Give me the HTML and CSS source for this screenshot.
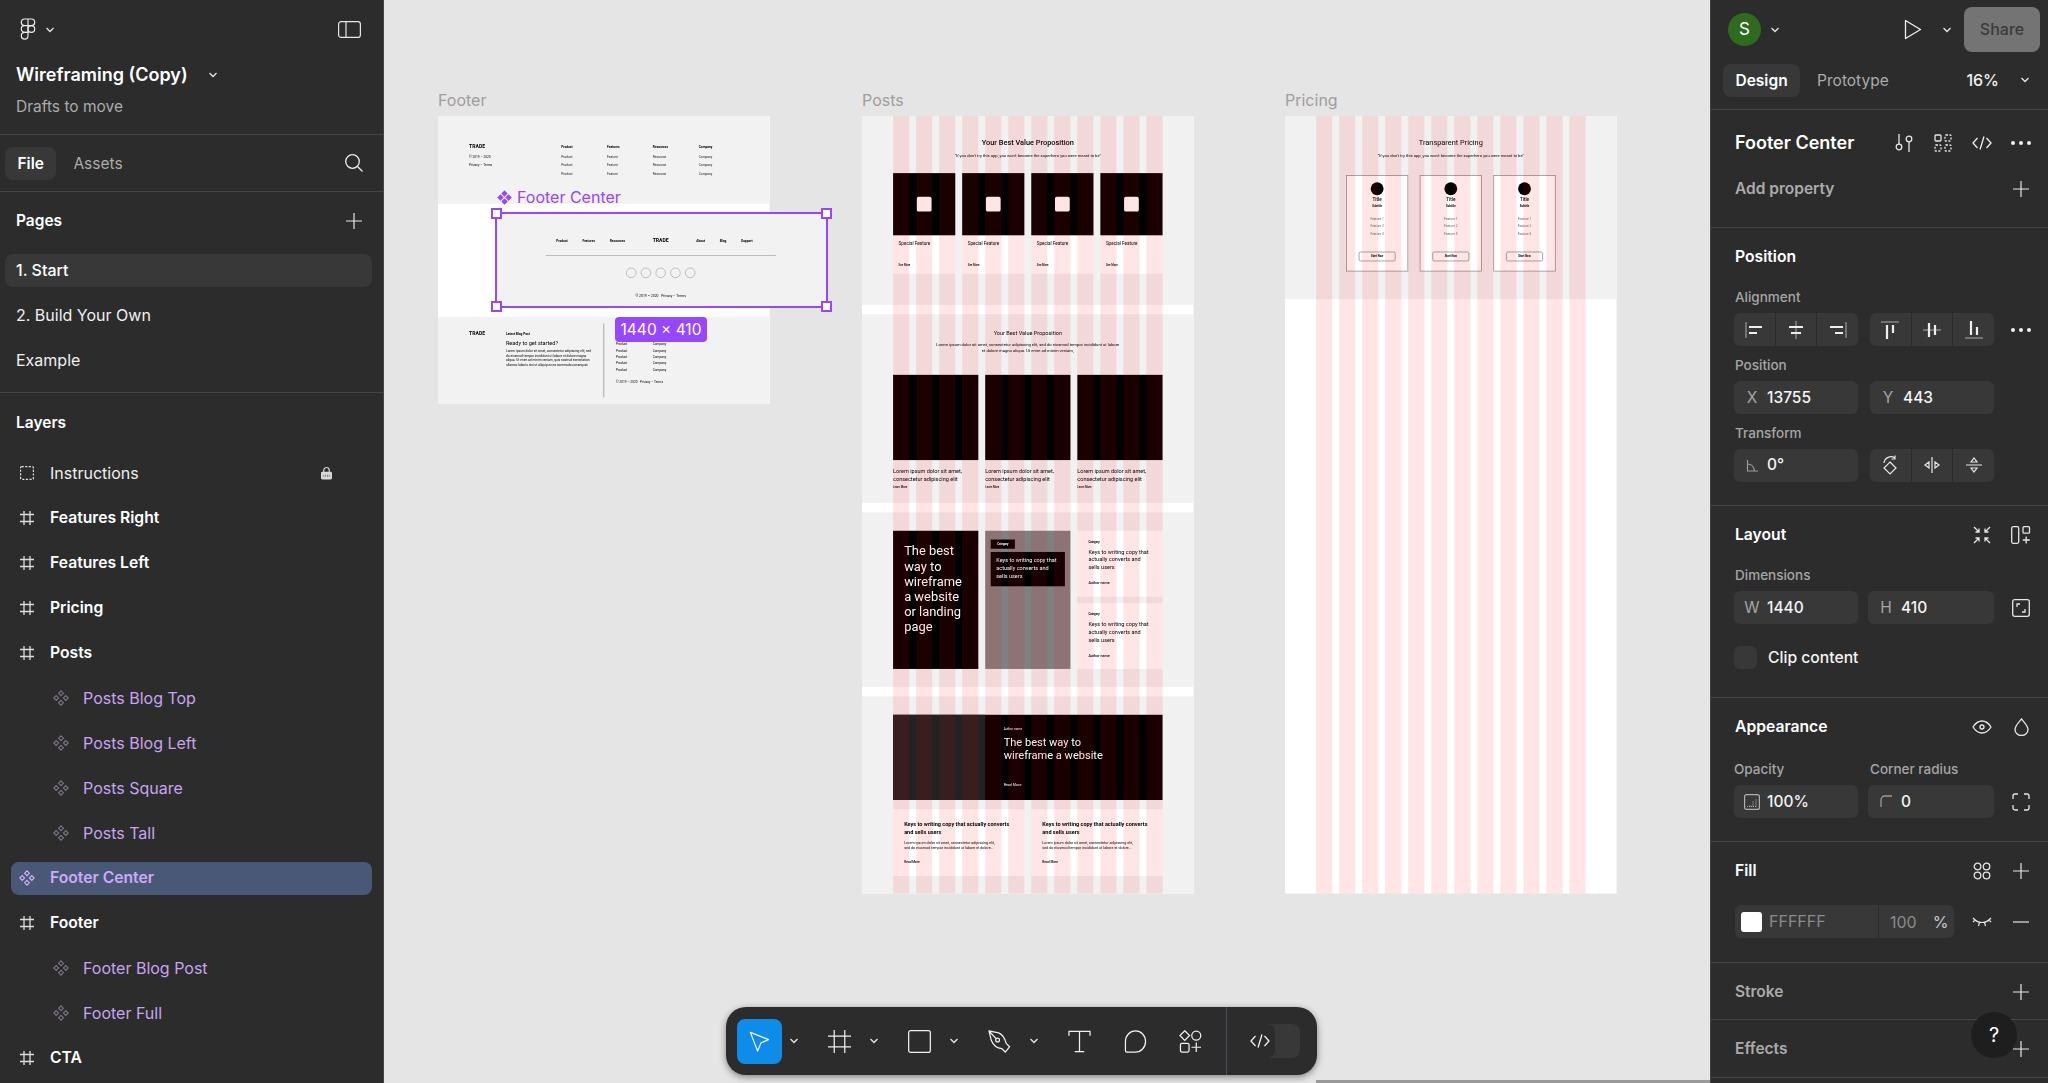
FILE: index.html
```html
<!DOCTYPE html>
<html lang="en">
<head>
    <meta charset="UTF-8">
    <title>Wireframing (Copy) - Figma</title>
    <link rel="stylesheet" href="styles.css">
</head>
<body>
    <svg class="defs" width="0" height="0">
        <symbol id="i-chev" viewBox="0 0 10 6"><path d="M1.5 1l3.5 3.5L8.5 1" fill="none" stroke="currentColor" stroke-width="1.3"/></symbol>
        <symbol id="i-plus" viewBox="0 0 16 16"><path d="M8 0v16M0 8h16" fill="none" stroke="currentColor" stroke-width="1.2"/></symbol>
        <symbol id="i-hash" viewBox="0 0 14 14"><path d="M4 0v14M10 0v14M0 3.5h14M0 10.5h14" fill="none" stroke="currentColor" stroke-width="1.3"/></symbol>
        <symbol id="i-comp" viewBox="0 0 16 16"><path d="M8 .8l2.4 2.4L8 5.6 5.6 3.2zM3.2 5.6l2.4 2.4-2.4 2.4L.8 8zM12.800 5.6L15.200 8l-2.400 2.400L10.400 8zM8 10.400l2.400 2.400L8 15.200l-2.400-2.400z" fill="none" stroke="currentColor" stroke-width="1.100"/></symbol>
        <symbol id="i-dots" viewBox="0 0 22 6"><circle cx="3" cy="3" r="2"/><circle cx="11" cy="3" r="2"/><circle cx="19" cy="3" r="2"/></symbol>
    </svg>

    <aside class="left-panel">
        <header class="file-head">
            <div class="logo-row">
                <svg class="figma-logo" viewBox="0 0 16 24" fill="none" stroke="currentColor" stroke-width="1.200">
                    <path d="M8 1H4.500a3.500 3.500 0 0 0 0 7H8zM8 1h3.500a3.500 3.500 0 0 1 0 7H8zM8 8H4.500a3.500 3.500 0 0 0 0 7H8z"/>
                    <circle cx="11.500" cy="11.500" r="3.500"/>
                    <path d="M4.500 15H8v3.500a3.500 3.500 0 1 1-3.500-3.500z"/>
                </svg>
                <svg class="chev"><use href="#i-chev"/></svg>
                <svg class="toggle-icon" viewBox="0 0 23 17" fill="none" stroke="currentColor" stroke-width="1.200">
                    <rect x=".6" y=".6" width="21.800" height="15.800" rx="2.500"/>
                    <path d="M8 .6v15.800"/>
                </svg>
            </div>
            <div class="file-title">Wireframing (Copy) <svg class="chev"><use href="#i-chev"/></svg></div>
            <div class="file-sub">Drafts to move</div>
        </header>

        <div class="tabs">
            <span class="tab tab-on">File</span>
            <span class="tab">Assets</span>
            <svg class="search-icon" viewBox="0 0 18 18" fill="none" stroke="currentColor" stroke-width="1.300">
                <circle cx="7.500" cy="7.500" r="6.800"/>
                <path d="M12.500 12.500l5 5"/>
            </svg>
        </div>

        <section class="pages">
            <div class="side-title">Pages <svg class="plus"><use href="#i-plus"/></svg></div>
            <div class="page-row page-on">1. Start</div>
            <div class="page-row">2. Build Your Own</div>
            <div class="page-row">Example</div>
        </section>

        <section class="layers">
            <div class="side-title">Layers</div>
            <div class="layer">
                <svg class="layer-icon" viewBox="0 0 14 14"><rect x=".6" y=".6" width="12.800" height="12.800" rx="1" fill="none" stroke="currentColor" stroke-width="1.200" stroke-dasharray="2.200 1.400"/></svg>
                <span class="layer-plain">Instructions</span>
                <svg class="lock" viewBox="0 0 12 14"><path d="M3 6V4a3 3 0 0 1 6 0v2" fill="none" stroke="currentColor" stroke-width="1.300"/><rect y="5.500" width="12" height="8.500" rx="1.500" fill="currentColor"/><path d="M2.500 10h7" stroke="#777" stroke-width="2" stroke-dasharray="1 1"/></svg>
            </div>
            <div class="layer"><svg class="layer-icon"><use href="#i-hash"/></svg><b>Features Right</b></div>
            <div class="layer"><svg class="layer-icon"><use href="#i-hash"/></svg><b>Features Left</b></div>
            <div class="layer"><svg class="layer-icon"><use href="#i-hash"/></svg><b>Pricing</b></div>
            <div class="layer"><svg class="layer-icon"><use href="#i-hash"/></svg><b>Posts</b></div>
            <div class="layer layer-child"><svg class="comp-icon"><use href="#i-comp"/></svg>Posts Blog Top</div>
            <div class="layer layer-child"><svg class="comp-icon"><use href="#i-comp"/></svg>Posts Blog Left</div>
            <div class="layer layer-child"><svg class="comp-icon"><use href="#i-comp"/></svg>Posts Square</div>
            <div class="layer layer-child"><svg class="comp-icon"><use href="#i-comp"/></svg>Posts Tall</div>
            <div class="layer layer-on"><svg class="layer-icon"><use href="#i-comp"/></svg>Footer Center</div>
            <div class="layer"><svg class="layer-icon"><use href="#i-hash"/></svg><b>Footer</b></div>
            <div class="layer layer-child"><svg class="comp-icon"><use href="#i-comp"/></svg>Footer Blog Post</div>
            <div class="layer layer-child"><svg class="comp-icon"><use href="#i-comp"/></svg>Footer Full</div>
            <div class="layer"><svg class="layer-icon"><use href="#i-hash"/></svg><b>CTA</b></div>
        </section>
    </aside>

    <main class="canvas">
        <div class="frame-label label-footer">Footer</div>
        <div class="frame-label label-posts">Posts</div>
        <div class="frame-label label-pricing">Pricing</div>

        <!-- frames are built at 1440 wide and scaled down like the zoomed canvas -->
        <div class="frame frame-footer">
            <div class="ft-top">
                <div class="ft-brand">
                    <div class="trade">TRADE</div>
                    <p>© 2019 – 2020</p>
                    <p>Privacy – Terms</p>
                </div>
                <div class="ft-col"><b>Product</b><span>Product</span><span>Product</span><span>Product</span></div>
                <div class="ft-col"><b>Features</b><span>Feature</span><span>Feature</span><span>Feature</span></div>
                <div class="ft-col"><b>Resources</b><span>Resource</span><span>Resource</span><span>Resource</span></div>
                <div class="ft-col"><b>Company</b><span>Company</span><span>Company</span><span>Company</span></div>
            </div>
            <div class="ft-gap"></div>
            <div class="ft-bottom">
                <div class="trade ft-bottom-logo">TRADE</div>
                <div class="ft-post">
                    <b>Latest Blog Post</b>
                    <h4>Ready to get started?</h4>
                    <p>Lorem ipsum dolor sit amet, consectetur adipiscing elit, sed do eiusmod tempor incididunt ut labore et dolore magna aliqua. Ut enim ad minim veniam, quis nostrud exercitation ullamco laboris nisi ut aliquip ex ea commodo consequat.</p>
                </div>
                <div class="ft-rule"></div>
                <div class="ft-links">
                    <div class="ft-link-cols">
                        <div class="ft-link-col"><span>Product</span><span>Product</span><span>Product</span><span>Product</span><span>Product</span></div>
                        <div class="ft-link-col"><span>Company</span><span>Company</span><span>Company</span><span>Company</span><span>Company</span></div>
                    </div>
                    <p>© 2019 – 2020 &nbsp; Privacy – Terms</p>
                </div>
            </div>

            <div class="footer-center">
                <nav class="fc-nav">
                    <div class="fc-nav-left"><b>Product</b><b>Features</b><b>Resources</b></div>
                    <div class="trade">TRADE</div>
                    <div class="fc-nav-right"><b>About</b><b>Blog</b><b>Support</b></div>
                </nav>
                <div class="fc-line"></div>
                <div class="fc-circles"><i></i><i></i><i></i><i></i><i></i></div>
                <p class="fc-copy">© 2019 – 2020 &nbsp; Privacy – Terms</p>
            </div>
        </div>

        <div class="frame frame-posts">
            <section class="wf s-features">
                <h2>Your Best Value Proposition</h2>
                <p class="wf-sub">"If you don't try this app, you won't become the superhero you were meant to be"</p>
                <div class="feature-row">
                    <div class="feature"><div class="feature-img"><i></i></div><h5>Special Feature</h5><b>See More →</b></div>
                    <div class="feature"><div class="feature-img"><i></i></div><h5>Special Feature</h5><b>See More →</b></div>
                    <div class="feature"><div class="feature-img"><i></i></div><h5>Special Feature</h5><b>See More →</b></div>
                    <div class="feature"><div class="feature-img"><i></i></div><h5>Special Feature</h5><b>See More →</b></div>
                </div>
            </section>
            <section class="wf s-blog">
                <h3>Your Best Value Proposition</h3>
                <p class="wf-lead">Lorem ipsum dolor sit amet, consectetur adipiscing elit, sed do eiusmod tempor incididunt ut labore<br>et dolore magna aliqua. Ut enim ad minim veniam,</p>
                <div class="blog-row">
                    <div class="blog"><div class="blog-img"></div><p>Lorem ipsum dolor sit amet,<br>consectetur adipiscing elit</p><b>Learn More</b></div>
                    <div class="blog"><div class="blog-img"></div><p>Lorem ipsum dolor sit amet,<br>consectetur adipiscing elit</p><b>Learn More</b></div>
                    <div class="blog"><div class="blog-img"></div><p>Lorem ipsum dolor sit amet,<br>consectetur adipiscing elit</p><b>Learn More</b></div>
                </div>
            </section>
            <section class="wf s-square">
                <div class="tall tall-dark">The best<br>way to<br>wireframe<br>a website<br>or landing<br>page</div>
                <div class="tall tall-gray">
                    <span class="tag">Category</span>
                    <p class="tall-box">Keys to writing copy that actually converts and sells users</p>
                </div>
                <div class="stack">
                    <div class="mini"><b>Category</b><p>Keys to writing copy that actually converts and sells users</p><span>Author name</span></div>
                    <div class="mini"><b>Category</b><p>Keys to writing copy that actually converts and sells users</p><span>Author name</span></div>
                </div>
            </section>
            <section class="wf s-hero">
                <div class="hero">
                    <div class="hero-img"></div>
                    <div class="hero-body">
                        <small>Author name</small>
                        <h2>The best way to<br>wireframe a website</h2>
                        <span>Read More</span>
                    </div>
                </div>
                <div class="teaser-row">
                    <div class="teaser"><h5>Keys to writing copy that actually converts and sells users</h5><p>Lorem ipsum dolor sit amet, consectetur adipiscing elit,<br>sed do eiusmod tempor incididunt ut labore et dolore...</p><b>Read More</b></div>
                    <div class="teaser"><h5>Keys to writing copy that actually converts and sells users</h5><p>Lorem ipsum dolor sit amet, consectetur adipiscing elit,<br>sed do eiusmod tempor incididunt ut labore et dolore...</p><b>Read More</b></div>
                </div>
            </section>
            <div class="cols"><i></i><i></i><i></i><i></i><i></i><i></i><i></i><i></i><i></i><i></i><i></i><i></i></div>
        </div>

        <div class="frame frame-pricing">
            <section class="wf s-pricing">
                <h2>Transparent Pricing</h2>
                <p class="wf-sub">"If you don't try this app, you won't become the superhero you were meant to be"</p>
                <div class="price-row">
                    <div class="price"><i></i><h6>Title</h6><b>Subtitle</b><span>Feature 1</span><span>Feature 2</span><span>Feature 3</span><div class="price-btn">Start Now</div></div>
                    <div class="price"><i></i><h6>Title</h6><b>Subtitle</b><span>Feature 1</span><span>Feature 2</span><span>Feature 3</span><div class="price-btn">Start Now</div></div>
                    <div class="price"><i></i><h6>Title</h6><b>Subtitle</b><span>Feature 1</span><span>Feature 2</span><span>Feature 3</span><div class="price-btn">Start Now</div></div>
                </div>
            </section>
            <div class="cols"><i></i><i></i><i></i><i></i><i></i><i></i><i></i><i></i><i></i><i></i><i></i><i></i></div>
        </div>

        <div class="sel-label"><svg class="sel-icon" viewBox="0 0 16 16"><path d="M8 .3l3.400 3.400L8 7.100 4.600 3.700zM3.700 4.600L7.100 8l-3.400 3.400L.3 8zM12.300 4.600L15.700 8l-3.400 3.400L8.900 8zM8 8.900l3.400 3.400L8 15.700l-3.400-3.400z" fill="currentColor"/></svg>Footer Center</div>
        <div class="selection"><i class="h-tl"></i><i class="h-tr"></i><i class="h-bl"></i><i class="h-br"></i></div>
        <div class="size-chip">1440 × 410</div>

        <div class="toolbar">
            <div class="tool-on">
                <svg class="tool" viewBox="0 0 24 24" fill="none" stroke="currentColor" stroke-width="1.300" stroke-linejoin="round"><path d="M2.500 2.500l19 7.500-8 3.500-3.500 8.500z"/></svg>
            </div>
            <svg class="chev tb-chev"><use href="#i-chev"/></svg>
            <svg class="tool tb-gap" viewBox="0 0 24 24" fill="none" stroke="currentColor" stroke-width="1.300"><path d="M6.500 0v24M17.500 0v24M0 6.500h24M0 17.500h24"/></svg>
            <svg class="chev tb-chev"><use href="#i-chev"/></svg>
            <svg class="tool tb-gap" viewBox="0 0 24 24" fill="none" stroke="currentColor" stroke-width="1.300"><rect x=".7" y=".7" width="22.600" height="22.600" rx="2"/></svg>
            <svg class="chev tb-chev"><use href="#i-chev"/></svg>
            <svg class="tool tb-gap" viewBox="0 0 24 24" fill="none" stroke="currentColor" stroke-width="1.300" stroke-linejoin="round"><path d="M1 1l10 2c5 2 7 7 8 11l3.500 3.500L18 23l-3.500-3.500C10 19 5.500 16 3.500 11zM1 1l7.500 8"/><circle cx="10" cy="10.500" r="2"/></svg>
            <svg class="chev tb-chev"><use href="#i-chev"/></svg>
            <svg class="tool tb-gap" viewBox="0 0 24 24" fill="none" stroke="currentColor" stroke-width="1.300"><path d="M1 6V1.500h22V6M12 1.500v21M7 22.500h10"/></svg>
            <svg class="tool tb-bubble" viewBox="0 0 24 24" fill="none" stroke="currentColor" stroke-width="1.300"><path d="M3.500 23H12a10.500 11 0 1 0-10.500-11v9a2 2 0 0 0 2 2z"/></svg>
            <svg class="tool tb-comps" viewBox="0 0 24 24" fill="none" stroke="currentColor" stroke-width="1.300"><path d="M6 .8l5 5-5 5-5-5z"/><circle cx="18" cy="5.800" r="4.700"/><rect x="1.500" y="14" width="9" height="9" rx="1.500"/><path d="M18 13v10M13 18h10"/></svg>
            <div class="tb-line"></div>
            <div class="tb-switch">
                <div class="tb-knob">
                    <svg class="code-icon" viewBox="0 0 20 14" fill="none" stroke="currentColor" stroke-width="1.300"><path d="M5.500 2L1 7l4.500 5M14.500 2L19 7l-4.500 5M12 .5L8 13.500"/></svg>
                </div>
            </div>
        </div>
        <div class="hscroll"></div>
    </main>

    <aside class="right-panel">
        <div class="user-row">
            <div class="avatar">S</div>
            <svg class="chev"><use href="#i-chev"/></svg>
            <svg class="play" viewBox="0 0 18 21" fill="none" stroke="currentColor" stroke-width="1.300" stroke-linejoin="round"><path d="M1.500 1.500v18l15-9z"/></svg>
            <svg class="chev play-chev"><use href="#i-chev"/></svg>
            <div class="share">Share</div>
        </div>
        <div class="mode-row">
            <span class="tab tab-on">Design</span>
            <span class="tab">Prototype</span>
            <span class="zoom-val">16%</span>
            <svg class="chev zoom-chev"><use href="#i-chev"/></svg>
        </div>

        <section class="sec sec-comp">
            <div class="sec-head">
                <h3 class="comp-name">Footer Center</h3>
                <div class="slots">
                    <span class="slot"><svg width="18" height="20" viewBox="0 0 18 20" fill="none" stroke="currentColor" stroke-width="1.300"><path d="M4 1v10M14 9v10"/><circle cx="4" cy="14" r="2.800"/><circle cx="14" cy="6" r="2.800"/></svg></span>
                    <span class="slot"><svg width="18" height="18" viewBox="0 0 18 18" fill="none" stroke="currentColor" stroke-width="1.300"><rect x="1" y="1" width="6" height="6" rx="1"/><rect x="11" y="1" width="6" height="6" rx="1" stroke-dasharray="2 1.500"/><rect x="1" y="11" width="6" height="6" rx="1" stroke-dasharray="2 1.500"/><rect x="11" y="11" width="6" height="6" rx="1" stroke-dasharray="2 1.500"/></svg></span>
                    <span class="slot"><svg class="code-icon" viewBox="0 0 20 14" fill="none" stroke="currentColor" stroke-width="1.300"><path d="M5.500 2L1 7l4.500 5M14.500 2L19 7l-4.500 5M12 .5L8 13.500"/></svg></span>
                    <span class="slot"><svg class="dots"><use href="#i-dots"/></svg></span>
                </div>
            </div>
            <div class="sec-head add-row">
                <span class="dim-title">Add property</span>
                <div class="slots"><span class="slot"><svg class="plus"><use href="#i-plus"/></svg></span></div>
            </div>
        </section>

        <section class="sec sec-pos">
            <div class="sec-head"><h4>Position</h4></div>
            <div class="field-label lab-align">Alignment</div>
            <div class="field-row">
                <div class="seg">
                    <span><svg class="al" viewBox="0 0 20 20"><path d="M2 2v16" stroke="#9a9a9a" stroke-width="1.200"/><path d="M5 7h13M5 13h8" stroke="#eee" stroke-width="2.200"/></svg></span>
                    <span><svg class="al" viewBox="0 0 20 20"><path d="M10 1v18" stroke="#9a9a9a" stroke-width="1.200"/><path d="M3 7h14M5 13h10" stroke="#eee" stroke-width="2.200"/></svg></span>
                    <span><svg class="al" viewBox="0 0 20 20"><path d="M18 2v16" stroke="#9a9a9a" stroke-width="1.200"/><path d="M2 7h13M7 13h8" stroke="#eee" stroke-width="2.200"/></svg></span>
                </div>
                <div class="seg">
                    <span><svg class="al" viewBox="0 0 20 20"><path d="M1 2h18" stroke="#9a9a9a" stroke-width="1.200"/><path d="M7 5v14M13 5v8" stroke="#eee" stroke-width="2.200"/></svg></span>
                    <span><svg class="al" viewBox="0 0 20 20"><path d="M1 10h18" stroke="#9a9a9a" stroke-width="1.200"/><path d="M7 3v14M13 5v10" stroke="#eee" stroke-width="2.200"/></svg></span>
                    <span><svg class="al" viewBox="0 0 20 20"><path d="M1 18h18" stroke="#9a9a9a" stroke-width="1.200"/><path d="M7 1v14M13 7v8" stroke="#eee" stroke-width="2.200"/></svg></span>
                </div>
                <span class="slot slot-end"><svg class="dots"><use href="#i-dots"/></svg></span>
            </div>
            <div class="field-label lab-pos">Position</div>
            <div class="field-row">
                <div class="field"><span class="key">X</span>13755</div>
                <div class="field"><span class="key">Y</span>443</div>
            </div>
            <div class="field-label lab-trans">Transform</div>
            <div class="field-row">
                <div class="field">
                    <span class="key"><svg width="13" height="13" viewBox="0 0 13 13" fill="none" stroke="#9a9a9a" stroke-width="1.200"><path d="M1.500 1v11H12M1.500 5c4 0 6.500 3 7 7"/></svg></span>0°
                </div>
                <div class="seg">
                    <span><svg class="al" viewBox="0 0 20 20" fill="none" stroke="#e8e8e8" stroke-width="1.200"><path d="M10 7l6 6-6 6-6-6z"/><path d="M4 8a7 7 0 0 1 11-5M15 .5V4h-3.500"/></svg></span>
                    <span><svg class="al" viewBox="0 0 20 20" fill="none" stroke="#e8e8e8" stroke-width="1.200"><path d="M10 2v16M7 7v6l-4-3zM13 7v6l4-3z"/></svg></span>
                    <span><svg class="al" viewBox="0 0 20 20" fill="none" stroke="#e8e8e8" stroke-width="1.200"><path d="M2 10h16M7 7h6l-3-4zM7 13h6l-3 4z"/></svg></span>
                </div>
            </div>
        </section>

        <section class="sec sec-layout">
            <div class="sec-head">
                <h4>Layout</h4>
                <div class="slots">
                    <span class="slot"><svg width="18" height="18" viewBox="0 0 18 18" fill="none" stroke="currentColor" stroke-width="1.300"><path d="M1 1l5 5M6 2.500V6H2.500M17 1l-5 5M12 2.500V6h3.500M1 17l5-5M6 15.500V12H2.500M17 17l-5-5M12 15.500V12h3.500"/></svg></span>
                    <span class="slot"><svg width="20" height="18" viewBox="0 0 20 18" fill="none" stroke="currentColor" stroke-width="1.300"><rect x=".7" y=".7" width="7" height="16.600" rx="1.500"/><rect x="12" y=".7" width="6.500" height="6.500" rx="1"/><path d="M15.200 10.500v7M11.800 14h7"/></svg></span>
                </div>
            </div>
            <div class="field-label lab-dim">Dimensions</div>
            <div class="field-row">
                <div class="field"><span class="key">W</span>1440</div>
                <div class="field field-wide"><span class="key">H</span>410</div>
                <span class="slot slot-end"><svg width="18" height="18" viewBox="0 0 18 18" fill="none" stroke="currentColor" stroke-width="1.300"><rect x=".7" y=".7" width="16.600" height="16.600" rx="2"/><path d="M5 8V5h3M13 10v3h-3"/></svg></span>
            </div>
            <div class="clip-row"><span class="check"></span>Clip content</div>
        </section>

        <section class="sec sec-appear">
            <div class="sec-head">
                <h4>Appearance</h4>
                <div class="slots">
                    <span class="slot"><svg width="20" height="14" viewBox="0 0 20 14" fill="none" stroke="currentColor" stroke-width="1.300"><path d="M1 7c2.500-4 5.500-6 9-6s6.500 2 9 6c-2.500 4-5.500 6-9 6s-6.500-2-9-6z"/><circle cx="10" cy="7" r="2"/></svg></span>
                    <span class="slot"><svg width="15" height="18" viewBox="0 0 15 18" fill="none" stroke="currentColor" stroke-width="1.300"><path d="M7.500 1c3 3.500 6.500 7 6.500 10.500a6.500 6 0 0 1-13 0C1 8 4.500 4.500 7.500 1z"/></svg></span>
                </div>
            </div>
            <div class="field-row lab-two">
                <div class="field-label">Opacity</div>
                <div class="field-label">Corner radius</div>
            </div>
            <div class="field-row">
                <div class="field"><span class="key"><svg width="16" height="16" viewBox="0 0 16 16" fill="none" stroke="#b0b0b0" stroke-width="1.200"><rect x=".6" y=".6" width="14.800" height="14.800" rx="2"/><path d="M3 12.500h10M6 12.500v-2M9 12.500v-5M12 12.500v-8" stroke-dasharray="1 1"/></svg></span>100%</div>
                <div class="field field-wide"><span class="key"><svg width="13" height="13" viewBox="0 0 13 13" fill="none" stroke="#9a9a9a" stroke-width="1.300"><path d="M1 12V5a4 4 0 0 1 4-4h7"/></svg></span>0</div>
                <span class="slot slot-end"><svg width="18" height="18" viewBox="0 0 18 18" fill="none" stroke="currentColor" stroke-width="1.300"><path d="M1 6V3a2 2 0 0 1 2-2h3M12 1h3a2 2 0 0 1 2 2v3M17 12v3a2 2 0 0 1-2 2h-3M6 17H3a2 2 0 0 1-2-2v-3"/></svg></span>
            </div>
        </section>

        <section class="sec sec-fill">
            <div class="sec-head">
                <h4>Fill</h4>
                <div class="slots">
                    <span class="slot"><svg width="18" height="18" viewBox="0 0 18 18" fill="none" stroke="currentColor" stroke-width="1.300"><circle cx="4.500" cy="4.500" r="3.300"/><circle cx="13.500" cy="4.500" r="3.300"/><circle cx="4.500" cy="13.500" r="3.300"/><circle cx="13.500" cy="13.500" r="3.300"/></svg></span>
                    <span class="slot"><svg class="plus"><use href="#i-plus"/></svg></span>
                </div>
            </div>
            <div class="field-row fill-row">
                <div class="fill-field">
                    <span class="swatch"></span>
                    <span class="hex">FFFFFF</span>
                    <span class="pct">100</span>
                    <span class="pct-sign">%</span>
                </div>
                <div class="slots">
                    <span class="slot"><svg width="20" height="10" viewBox="0 0 20 10" fill="none" stroke="currentColor" stroke-width="1.200"><path d="M1 1c2.500 3 5.500 4.500 9 4.500S16.500 4 19 1M1 5l2-2M19 5l-2-2M6.500 9l1-3.500M13.500 9l-1-3.500"/></svg></span>
                    <span class="slot"><svg width="16" height="2" viewBox="0 0 16 2"><path d="M0 1h16" stroke="currentColor" stroke-width="1.200"/></svg></span>
                </div>
            </div>
        </section>

        <section class="sec sec-stroke">
            <div class="sec-head">
                <span class="dim-title">Stroke</span>
                <div class="slots"><span class="slot"><svg class="plus"><use href="#i-plus"/></svg></span></div>
            </div>
        </section>
        <section class="sec sec-effects">
            <div class="sec-head">
                <span class="dim-title">Effects</span>
                <div class="slots"><span class="slot"><svg class="plus"><use href="#i-plus"/></svg></span></div>
            </div>
        </section>
        <div class="help">?</div>
    </aside>
</body>
</html>
```

FILE: styles.css
```css
*{
    box-sizing: border-box;
}
html,body,h2,h3,h4,h5,h6,p{
    margin: 0;
    padding: 0;
}
body{
    display: flex;
    width: 2048px;
    height: 1083px;
    overflow: hidden;
    background: #2c2c2c;
    color: #fff;
    font: 400 16px/20px Inter, "Liberation Sans", sans-serif;
}
i{
    display: block;
}
.defs{
    position: absolute;
}
.chev{
    width: 10px;
    height: 6px;
    flex: none;
    color: #e6e6e6;
}
.plus{
    width: 16px;
    height: 16px;
    color: #e6e6e6;
}
.dots{
    width: 22px;
    height: 6px;
    fill: #f0f0f0;
}

/* left panel */
.left-panel{
    width: 384px;
    flex: none;
    background: #2c2c2c;
    border-right: 1px solid #444;
}
.file-head{
    height: 135px;
    padding: 18px 16px 0;
    border-bottom: 1px solid #444;
}
.logo-row{
    display: flex;
    align-items: center;
    height: 23px;
    padding-left: 4px;
    padding-right: 6px;
}
.figma-logo{
    width: 16px;
    height: 23px;
    color: #eee;
}
.logo-row .chev{
    margin-left: 9px;
}
.toggle-icon{
    width: 23px;
    height: 17px;
    margin-left: auto;
    color: #e6e6e6;
}
.file-title{
    display: flex;
    align-items: center;
    margin-top: 22px;
    font-size: 18px;
    line-height: 24px;
    font-weight: 600;
}
.file-title .chev{
    margin-left: 20px;
}
.file-sub{
    margin-top: 10px;
    color: #ababab;
    font-size: 15.500px;
}
.tabs{
    display: flex;
    align-items: center;
    height: 57px;
    padding: 0 20px 0 5px;
    border-bottom: 1px solid #444;
}
.tab{
    height: 33px;
    padding: 0 12px;
    margin-right: 5px;
    color: #ababab;
    font-size: 15.500px;
    line-height: 33px;
    border-radius: 8px;
}
.tab-on{
    padding: 0 12.500px;
    background: #383838;
    color: #fff;
    font-weight: 600;
}
.search-icon{
    width: 18px;
    height: 18px;
    margin-left: auto;
    color: #eee;
}
.pages{
    height: 201px;
    padding-top: 18.500px;
    border-bottom: 1px solid #444;
}
.side-title{
    display: flex;
    align-items: center;
    justify-content: space-between;
    height: 20px;
    margin-bottom: 23.500px;
    padding: 0 21px 0 16px;
    font-size: 15.500px;
    font-weight: 600;
}
.page-row{
    height: 33px;
    margin: 0 11px 12px 5px;
    padding-left: 11px;
    color: #f0f0f0;
    line-height: 33px;
    border-radius: 8px;
}
.page-on{
    background: #383838;
    color: #fff;
    font-weight: 500;
}
.layers{
    padding-top: 20px;
}
.layers .side-title{
    margin-bottom: 23.500px;
}
.layer{
    display: flex;
    align-items: center;
    height: 33px;
    margin: 0 11px 12px;
    padding-left: 9px;
    color: #f0f0f0;
    border-radius: 8px;
}
.layer b{
    font-size: 15.700px;
    font-weight: 600;
    color: #fff;
}
.layer-plain{
    flex: none;
}
.layer-icon{
    width: 14px;
    height: 14px;
    flex: none;
    margin-right: 16px;
    color: #dcdcdc;
}
.lock{
    width: 11px;
    height: 14px;
    margin-left: 182px;
    color: #d8d8d8;
}
.layer-child{
    padding-left: 42px;
    color: #c7a4f0;
}
.comp-icon{
    width: 16px;
    height: 16px;
    flex: none;
    margin-right: 14px;
    color: #7d7389;
}
.layer-on{
    background: #4a5878;
    color: #cdaaf5;
    font-size: 15.700px;
    font-weight: 600;
}
.layer-on .layer-icon{
    color: #d4b4f7;
    height: 16px;
    width: 16px;
    margin-left: -1px;
    margin-right: 15px;
}

/* canvas */
.canvas{
    position: relative;
    flex: none;
    width: 1326px;
    height: 1083px;
    overflow: hidden;
    background: #e5e5e5;
}
.frame-label{
    position: absolute;
    top: 90px;
    color: #a19c9c;
    font-size: 16px;
}
.label-footer{
    left: 54px;
}
.label-posts{
    left: 478px;
}
.label-pricing{
    left: 901px;
}
.frame{
    position: absolute;
    top: 116.300px;
    width: 1440px;
    transform: scale(.2303);
    transform-origin: 0 0;
    filter: blur(.9px);
    color: #000;
    background: #fff;
    font: 400 14px/20px Roboto, "Liberation Sans", sans-serif;
}
.frame-footer{
    left: 54.300px;
    height: 1249px;
}
.frame-posts{
    left: 477.800px;
    height: 3376px;
}
.frame-pricing{
    left: 901px;
    height: 3376px;
}
.cols{
    position: absolute;
    top: 0;
    bottom: 0;
    left: 135px;
    width: 1170px;
    display: grid;
    grid-template-columns: repeat(12, 70px);
    column-gap: 30px;
}
.cols i{
    background: rgba(255, 0, 0, .1);
}
.wf{
    background: #f1f1f1;
}

/* footer frame */
.trade{
    font-size: 22px;
    font-weight: 700;
    line-height: 26px;
}
.ft-top{
    display: flex;
    height: 382px;
    padding: 120px 0 0 135px;
    background: #f2f2f2;
}
.ft-brand{
    width: 400px;
}
.ft-brand p{
    margin-top: 21px;
    font-size: 14px;
}
.ft-brand p + p{
    margin-top: 14px;
}
.ft-col{
    display: flex;
    flex-direction: column;
    width: 199px;
    padding-top: 2px;
}
.ft-col b{
    margin-bottom: 25px;
}
.ft-col span{
    margin-bottom: 17px;
    color: #222;
}
.ft-gap{
    height: 490px;
}
.ft-bottom{
    display: flex;
    height: 377px;
    padding: 29px 0 0 135px;
    background: #f2f2f2;
}
.ft-bottom-logo{
    width: 160px;
    padding-top: 30px;
}
.ft-post{
    width: 423px;
    padding-top: 36px;
}
.ft-post b{
    display: block;
}
.ft-post h4{
    margin-top: 15px;
    font-size: 24px;
    line-height: 30px;
    font-weight: 400;
}
.ft-post p{
    width: 380px;
    margin-top: 9px;
    font-size: 14px;
    line-height: 19.500px;
}
.ft-rule{
    width: 4px;
    height: 321px;
    background: #a89f9f;
}
.ft-links{
    padding: 79px 0 0 51px;
}
.ft-link-cols{
    display: flex;
}
.ft-link-col{
    display: flex;
    flex-direction: column;
    gap: 8px;
    width: 159px;
}
.ft-links p{
    margin-top: 33px;
}
.footer-center{
    position: absolute;
    top: 416px;
    left: 247px;
    width: 1440px;
    height: 410px;
    background: #f2f2f2;
    text-align: center;
}
.fc-nav{
    display: grid;
    grid-template-columns: 1fr auto 1fr;
    align-items: center;
    column-gap: 120px;
    padding-top: 113px;
}
.fc-nav-left,
.fc-nav-right{
    display: flex;
    gap: 64px;
}
.fc-nav-left{
    justify-content: flex-end;
}
.fc-line{
    width: 1000px;
    height: 3px;
    margin: 50px auto 0;
    background: #a89f9f;
}
.fc-circles{
    display: flex;
    justify-content: center;
    gap: 20px;
    margin-top: 51px;
}
.fc-circles i{
    width: 44px;
    height: 44px;
    border: 2.500px solid #8a8080;
    border-radius: 50%;
}
.fc-copy{
    margin-top: 68px;
    font-size: 15px;
}

/* posts frame */
.wf h2{
    font-size: 32px;
    font-weight: 500;
    line-height: 40px;
    text-align: center;
}
.wf-sub{
    margin-top: 23px;
    font-size: 18px;
    line-height: 24px;
    text-align: center;
}
.s-features{
    height: 820px;
    padding-top: 97px;
    margin-bottom: 41px;
}
.feature-row{
    display: grid;
    grid-template-columns: repeat(4, 270px);
    gap: 30px;
    width: 1170px;
    margin: 64px auto 0;
}
.feature{
    height: 437px;
    padding-bottom: 24px;
    background: #fff;
}
.feature-img{
    display: flex;
    align-items: center;
    justify-content: center;
    height: 270px;
    background: #000;
}
.feature-img i{
    width: 64px;
    height: 64px;
    background: #fff;
    border-radius: 8px;
}
.feature h5{
    margin: 21px 0 70px 24px;
    font-size: 20px;
    font-weight: 400;
    line-height: 30px;
}
.feature b{
    display: block;
    margin-left: 24px;
    font-size: 12px;
    line-height: 16px;
    font-weight: 500;
}
.s-blog{
    height: 819px;
    padding-top: 65px;
    margin-bottom: 41px;
    text-align: center;
}
.s-blog h3{
    font-size: 24px;
    font-weight: 400;
    line-height: 32px;
}
.wf-lead{
    margin-top: 20px;
    font-size: 18px;
    line-height: 28px;
}
.blog-row{
    display: grid;
    grid-template-columns: repeat(3, 370px);
    gap: 30px;
    width: 1170px;
    margin: 90px auto 0;
    text-align: left;
}
.blog-img{
    height: 370px;
    background: #000;
}
.blog p{
    margin-top: 30px;
    font-size: 24px;
    line-height: 34px;
}
.blog b{
    display: block;
    margin-top: 13px;
    font-size: 12px;
    line-height: 16px;
    font-weight: 500;
}
.s-square{
    display: grid;
    grid-template-columns: repeat(3, 370px);
    gap: 30px;
    height: 758px;
    padding: 80px 135px 75px;
    margin-bottom: 41px;
}
.tall{
    height: 600px;
}
.tall-dark{
    padding: 55px 48px 0;
    background: #000;
    color: #fff;
    font-size: 56px;
    line-height: 66px;
}
.tall-gray{
    padding: 38px 24px 0;
    background: #808080;
}
.tag{
    display: block;
    width: 105px;
    height: 40px;
    background: #000;
    color: #fff;
    font-size: 12px;
    font-weight: 700;
    line-height: 40px;
    text-align: center;
}
.tall-box{
    height: 149px;
    margin-top: 14px;
    padding: 20px 24px;
    background: #000;
    color: #fff;
    font-size: 24px;
    line-height: 34px;
}
.stack{
    display: flex;
    flex-direction: column;
    gap: 28px;
}
.mini{
    height: 286px;
    padding: 40px 48px 0;
    background: #fff;
}
.mini b{
    display: block;
    font-size: 12px;
    line-height: 18px;
}
.mini p{
    margin-top: 16px;
    font-size: 24px;
    line-height: 34px;
}
.mini span{
    display: block;
    margin-top: 42px;
    font-size: 16px;
    font-weight: 500;
}
.s-hero{
    height: 856px;
    padding: 80px 135px 0;
}
.hero{
    display: flex;
    height: 370px;
    background: #000;
    color: #fff;
}
.hero-img{
    width: 400px;
    background: #222;
}
.hero-body{
    padding: 52px 0 0 80px;
}
.hero-body small{
    display: block;
    font-size: 14px;
}
.s-hero .hero-body h2{
    margin-top: 18px;
    font-size: 48px;
    font-weight: 400;
    line-height: 56px;
    text-align: left;
}
.hero-body span{
    display: block;
    margin-top: 93px;
    font-size: 16px;
}
.teaser-row{
    display: grid;
    grid-template-columns: repeat(2, 570px);
    gap: 30px;
    margin-top: 40px;
}
.teaser{
    height: 290px;
    padding: 47px 48px 0;
    background: #fff;
}
.teaser h5{
    font-size: 24px;
    font-weight: 700;
    line-height: 34px;
}
.teaser p{
    margin-top: 17px;
    font-size: 16px;
    line-height: 24px;
}
.teaser b{
    display: block;
    margin-top: 38px;
    font-size: 14px;
    font-weight: 500;
}

/* pricing frame */
.s-pricing{
    height: 795px;
    padding-top: 97px;
}
.s-pricing h2{
    font-weight: 400;
}
.price-row{
    display: flex;
    justify-content: center;
    gap: 50px;
    margin-top: 73px;
}
.price{
    display: flex;
    flex-direction: column;
    align-items: center;
    width: 270px;
    height: 418px;
    padding-top: 28px;
    background: #fff;
    border: 3px solid #857c7c;
}
.price > i{
    width: 56px;
    height: 56px;
    background: #000;
    border-radius: 50%;
}
.price h6{
    margin-top: 8px;
    font-size: 20px;
    font-weight: 500;
    line-height: 24px;
}
.price > b{
    margin-top: 9px;
    font-size: 12px;
    line-height: 16px;
}
.price > span{
    margin-top: 14px;
    color: #666;
    line-height: 20px;
}
.price > b + span{
    margin-top: 34px;
}
.price-btn{
    width: 160px;
    height: 42px;
    margin-top: 66px;
    border: 3px solid #857c7c;
    border-radius: 8px;
    font-size: 12px;
    font-weight: 700;
    line-height: 36px;
    text-align: center;
}

/* selection */
.selection{
    position: absolute;
    top: 212px;
    left: 111px;
    width: 333px;
    height: 96px;
    border: 2px solid #9747ff;
}
.selection i{
    position: absolute;
    width: 11px;
    height: 11px;
    background: #fff;
    border: 2px solid #9747ff;
}
.h-tl{
    top: -6px;
    left: -6px;
}
.h-tr{
    top: -6px;
    right: -6px;
}
.h-bl{
    bottom: -6px;
    left: -6px;
}
.h-br{
    bottom: -6px;
    right: -6px;
}
.sel-label{
    position: absolute;
    top: 187px;
    left: 113px;
    display: flex;
    align-items: center;
    gap: 5px;
    color: #9747ff;
    font-size: 16px;
}
.sel-icon{
    width: 15px;
    height: 15px;
}
.size-chip{
    position: absolute;
    top: 317px;
    left: 231px;
    width: 92px;
    height: 25px;
    background: #9747ff;
    border-radius: 4px;
    font-size: 15.500px;
    line-height: 25px;
    text-align: center;
}

/* toolbar */
.toolbar{
    position: absolute;
    top: 1007px;
    left: 342px;
    display: flex;
    align-items: center;
    width: 591px;
    height: 68px;
    padding-left: 11px;
    background: #2c2c2c;
    border-radius: 20px;
    box-shadow: 0 2px 7px rgba(0, 0, 0, .45);
}
.tool-on{
    display: flex;
    align-items: center;
    justify-content: center;
    width: 45px;
    height: 45px;
    background: #0d8ce9;
    border-radius: 8px;
}
.tool{
    width: 23px;
    height: 23px;
    flex: none;
    color: #f0f0f0;
}
.tb-chev{
    margin-left: 7px;
}
.tb-chev ~ .tb-chev{
    margin-left: 18px;
}
.tb-gap{
    margin-left: 29px;
}
.tb-bubble{
    margin-left: 33px;
}
.tb-comps{
    margin-left: 32px;
}
.tb-line{
    width: 1px;
    height: 68px;
    margin-left: 24px;
    background: #444a55;
}
.tb-switch{
    width: 55px;
    height: 34px;
    margin-left: 18px;
    background: #383838;
    border-radius: 8px;
}
.tb-knob{
    display: flex;
    align-items: center;
    justify-content: center;
    width: 30px;
    height: 34px;
    background: #2c2c2c;
    border-radius: 8px;
}
.code-icon{
    width: 20px;
    height: 14px;
    color: #f0f0f0;
}
.hscroll{
    position: absolute;
    right: 0;
    bottom: 0;
    width: 394px;
    height: 3px;
    background: #999;
}

/* right panel */
.right-panel{
    position: relative;
    width: 338px;
    flex: none;
    background: #2c2c2c;
    border-left: 1px solid #444;
}
.user-row{
    display: flex;
    align-items: center;
    height: 59px;
    padding-left: 17px;
}
.avatar{
    width: 33px;
    height: 33px;
    background: #2f6b1e;
    border-radius: 50%;
    font-size: 17px;
    line-height: 33px;
    text-align: center;
}
.user-row > .chev{
    margin-left: 9px;
}
.play{
    width: 18px;
    height: 21px;
    margin-left: 124px;
    color: #f0f0f0;
}
.user-row > .play-chev{
    margin-left: 20px;
}
.share{
    width: 76px;
    height: 45px;
    margin-left: 12px;
    background: #747474;
    border-radius: 8px;
    color: #3b3b3b;
    font-weight: 500;
    line-height: 45px;
    text-align: center;
}
.mode-row{
    display: flex;
    align-items: center;
    height: 51px;
    padding: 5px 0 13px 12px;
    border-bottom: 1px solid #444;
}
.zoom-val{
    margin-left: auto;
    color: #f0f0f0;
    font-weight: 500;
}
.zoom-chev{
    margin: 0 18px 0 21px;
}
.sec{
    padding: 18.500px 16px 0 24px;
    border-bottom: 1px solid #444;
}
.sec-head{
    display: flex;
    align-items: center;
    justify-content: space-between;
    height: 20px;
}
.sec h4{
    font-size: 15.700px;
    font-weight: 600;
}
.comp-name{
    margin: 0;
    font-size: 18px;
    font-weight: 600;
}
.dim-title{
    color: #ababab;
    font-size: 15.500px;
    font-weight: 600;
}
.slots{
    display: flex;
    gap: 17px;
    color: #e6e6e6;
}
.slot{
    display: flex;
    align-items: center;
    justify-content: center;
    width: 22px;
    height: 20px;
    color: #e6e6e6;
}
.slot-end{
    margin-left: auto;
    height: 33px;
}
.sec-comp{
    height: 118px;
    padding-top: 23px;
}
.add-row{
    margin-top: 26px;
}
.sec-pos{
    height: 278px;
}
.field-label{
    height: 18px;
    margin-bottom: 7px;
    color: #a6a6a6;
    font-size: 13.500px;
    font-weight: 500;
    line-height: 18px;
}
.lab-align{
    margin-top: 21.500px;
}
.lab-pos{
    margin-top: 10px;
}
.lab-trans{
    margin-top: 9.500px;
}
.field-row{
    display: flex;
    gap: 12px;
    align-items: center;
    margin-left: -1px;
}
.seg{
    display: flex;
    width: 124px;
    height: 33px;
    background: #383838;
    border-radius: 6px;
}
.seg span{
    flex: 1;
    display: flex;
    align-items: center;
    justify-content: center;
}
.seg span + span{
    border-left: 1px solid #2c2c2c;
}
.al{
    width: 20px;
    height: 20px;
}
.field{
    display: flex;
    align-items: center;
    width: 124px;
    height: 33px;
    padding-left: 8px;
    background: #383838;
    border-radius: 6px;
    color: #f4f4f4;
    font-size: 15.500px;
    font-weight: 500;
}
.field-wide{
    width: 126px;
}
.key{
    display: flex;
    align-items: center;
    justify-content: center;
    width: 20px;
    margin-right: 5px;
    color: #a6a6a6;
    font-weight: 400;
}
.sec-layout{
    height: 192px;
}
.lab-dim{
    margin-top: 21.500px;
}
.sec-layout .field-row .field-wide,
.sec-appear .field-row .field-wide{
    margin-left: -2px;
}
.clip-row{
    display: flex;
    align-items: center;
    gap: 11px;
    margin: 22px 0 0 -1px;
    font-size: 15.700px;
    font-weight: 500;
    color: #f4f4f4;
}
.check{
    width: 23px;
    height: 23px;
    background: #383838;
    border-radius: 6px;
}
.sec-appear{
    height: 144px;
}
.lab-two{
    margin-top: 23.500px;
}
.lab-two .field-label + .field-label{
    margin-left: 0;
    width: 126px;
}
.lab-two .field-label:first-child{
    width: 124px;
}
.sec-fill{
    height: 121px;
}
.fill-row{
    justify-content: space-between;
    margin: 24.500px 0 0;
}
.fill-field{
    display: flex;
    align-items: center;
    width: 219px;
    height: 33px;
    padding-left: 6px;
    background: #383838;
    border-radius: 6px;
    color: #8a8a8a;
}
.swatch{
    width: 21px;
    height: 20px;
    background: #fff;
    border-radius: 3px;
}
.hex{
    width: 110px;
    height: 33px;
    margin-left: 7px;
    line-height: 33px;
    border-right: 1px solid #2c2c2c;
}
.pct{
    margin-left: 11px;
}
.pct-sign{
    margin-left: 16px;
    color: #c8c8c8;
}
.sec-stroke{
    height: 57px;
}
.sec-effects{
    height: 58px;
}
.help{
    position: absolute;
    top: 1012px;
    left: 260px;
    width: 46px;
    height: 46px;
    background: #1e1e1e;
    border-radius: 50%;
    font-size: 20px;
    line-height: 46px;
    text-align: center;
}
```
